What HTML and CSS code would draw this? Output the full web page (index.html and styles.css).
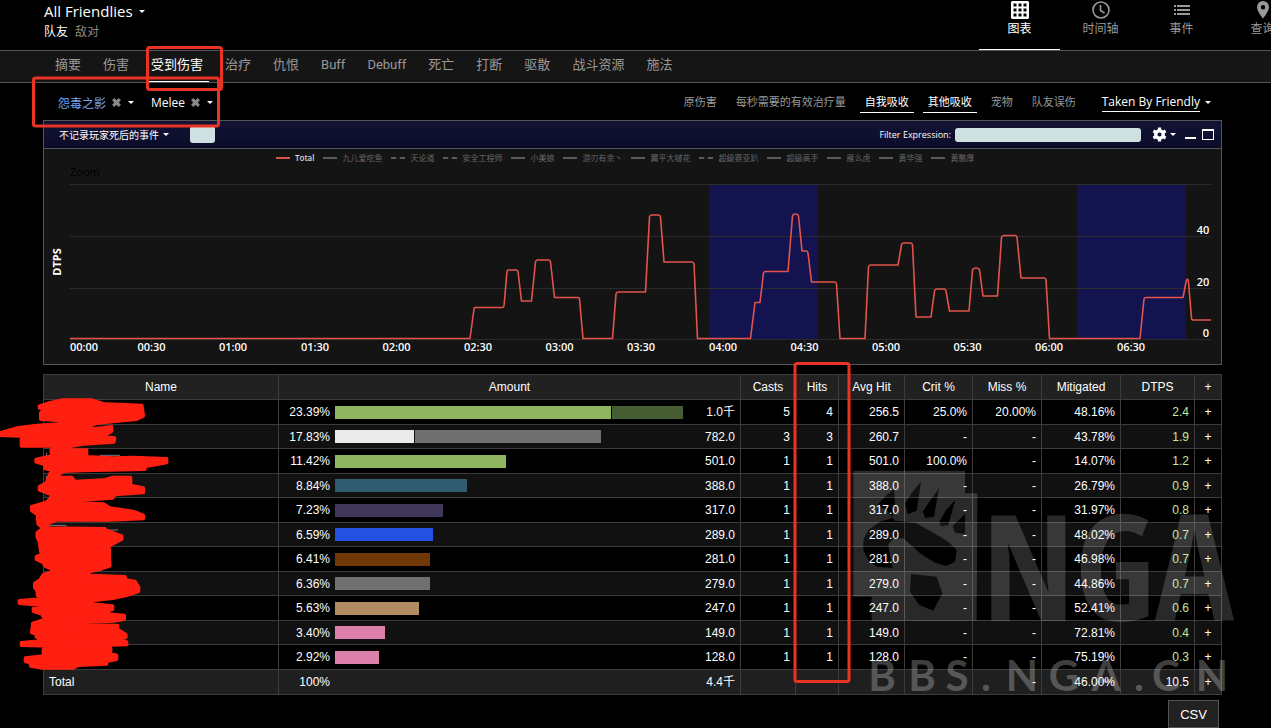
FILE: index.html
```html
<!DOCTYPE html>
<html lang="zh-CN">
<head>
<meta charset="utf-8">
<title>受到伤害</title>
<link rel="stylesheet" href="styles.css">
</head>
<body>
<header class="top">
  <div class="who">
    <button class="who-name">All Friendlies <i class="caret"></i></button>
    <div class="sides"><a class="on" href="#">队友</a><a href="#">敌对</a></div>
  </div>
  <nav class="views">
    <a class="view on" href="#"><svg viewBox="0 0 20 20"><path fill-rule="evenodd" d="M2 1h16l1 1v16l-1 1H2l-1-1V2zM3.500 3.500v3h3v-3zM8.500 3.500v3h3v-3zM13.500 3.500v3h3v-3zM3.500 8.500v3h3v-3zM8.500 8.500v3h3v-3zM13.500 8.500v3h3v-3zM3.500 13.500v3h3v-3zM8.500 13.500v3h3v-3zM13.500 13.500v3h3v-3z"/></svg>图表</a>
    <a class="view" href="#"><svg viewBox="0 0 20 20"><g fill="none" stroke="currentColor" stroke-width="1.600"><circle cx="10" cy="10" r="8"/><path d="M9.500 5v5.500l4 2.500"/></g></svg>时间轴</a>
    <a class="view" href="#"><svg viewBox="0 0 20 20"><path d="M2 5h2v2H2zM5 5h13v2H5zM2 9h2v2H2zM5 9h13v2H5zM2 13h2v2H2zM5 13h13v2H5z"/></svg>事件</a>
    <a class="view" href="#"><svg viewBox="0 0 20 20"><path fill-rule="evenodd" d="M10 1a6 6 0 0 0-6 6c0 4.500 6 11.500 6 11.500S16 11.500 16 7a6 6 0 0 0-6-6zm0 4a2.200 2.200 0 1 1 0 4.400A2.200 2.200 0 0 1 10 5z"/></svg>查询</a>
  </nav>
</header>
<nav class="tabs">
  <a href="#">摘要</a><a href="#">伤害</a><a class="on" href="#">受到伤害</a><a href="#">治疗</a><a href="#">仇恨</a><a href="#">Buff</a><a href="#">Debuff</a><a href="#">死亡</a><a href="#">打断</a><a href="#">驱散</a><a href="#">战斗资源</a><a href="#">施法</a>
</nav>
<main class="page">
  <div class="filters">
    <div class="picked">
      <span class="pick"><a class="enemy" href="#">怨毒之影</a><button class="x" aria-label="移除怨毒之影"><svg viewBox="0 0 10 10"><path d="M2 2l6 6M8 2l-6 6"/></svg></button><i class="caret"></i></span>
      <span class="pick"><a href="#">Melee</a><button class="x" aria-label="移除 Melee"><svg viewBox="0 0 10 10"><path d="M2 2l6 6M8 2l-6 6"/></svg></button><i class="caret"></i></span>
    </div>
    <div class="options">
      <a href="#">原伤害</a><a href="#">每秒需要的有效治疗量</a><a class="on" href="#">自我吸收</a><a class="on" href="#">其他吸收</a><a href="#">宠物</a><a href="#">队友误伤</a>
      <button class="by"><span>Taken By Friendly</span><i class="caret"></i></button>
    </div>
  </div>

  <section class="panel">
    <div class="bar">
      <button class="deaths">不记录玩家死后的事件<i class="caret"></i></button>
      <button class="blank" aria-label="切换"></button>
      <label class="expr-label" for="expr">Filter Expression:</label>
      <input class="expr" id="expr" type="text">
      <button class="gear" aria-label="设置"><svg viewBox="0 0 16 16"><g fill="none" stroke="currentColor"><circle cx="8" cy="8" r="4" stroke-width="3.600"/><path stroke-width="3.400" d="M8 0.500v3M8 12.500v3M1.500 4.250l2.600 1.500M11.900 10.250l2.600 1.500M1.500 11.750l2.600-1.500M11.900 5.750l2.600-1.500"/></g></svg><i class="caret"></i></button>
      <button class="min" aria-label="最小化"></button>
      <button class="max" aria-label="最大化"></button>
    </div>
    <div class="chart">
      <ul class="legend">
        <li class="on"><i></i>Total</li><li><i></i>九儿爱吃鱼</li><li class="dash"><i></i>天论道</li><li class="dash"><i></i>安全工程师</li><li><i></i>小美娘</li><li><i></i>游刃有余丶</li><li><i></i>翼平大啵花</li><li class="dash"><i></i>超级赛亚趴</li><li><i></i>超级高手</li><li><i></i>雁么虎</li><li><i></i>黄华强</li><li><i></i>黄憨厚</li>
      </ul>
      <div class="zoom">Zoom</div>
      <svg class="plot" viewBox="44 180 1177 184" role="img" aria-label="DTPS">
        <path class="band" d="M709 185h109v154H709zM1077 185h109v154h-109z"/>
        <path class="grid" d="M70 184.500H1211M70 236.500H1211M70 288.500H1211M70 339.500H1211M70.500 339v4M151.500 339v4M233.500 339v4M315.500 339v4M396.500 339v4M478.500 339v4M560.500 339v4M641.500 339v4M723.500 339v4M804.500 339v4M886.500 339v4M967.500 339v4M1049.500 339v4M1131.500 339v4"/>
        <path class="line" d="M70 338.500H470L474 309Q474 307.500 475.500 307.500H502Q503.500 307.500 504 306L507 271.500Q507 270 508.500 270H516Q517.500 270 518 271.500L521.500 301H531.500L535.500 262Q536 260 537.500 260H549Q550 260 550.500 262L554.500 297.500H578Q579 297.500 579.500 299L583 338.500H612.500L616 294Q616.500 292 618 292H645.500L649.500 217Q650 215 651.500 215H659Q660 215 660.500 217L664 262H692Q693.500 262 694 264L697.500 338.500H750.500L755 302.500H760L763.500 273Q764 271.500 765.500 271.500H788L792.500 216Q793 214 795.500 214T798.500 216L802 251H806.500Q807.500 251 808 253L811.500 282H835Q836 282 836.500 284L840 338.500H865L868.500 267Q869 265 870.500 265H898L901.500 245Q902 243 903.500 243H911Q912 243 912.500 245L916 317H931L934.500 291Q935 289 936.500 289H944.500Q945.500 289 946 291L949.500 311H969L972.500 270Q973 268 976 268T979.500 270L983 296H997.500L1001.500 237.500Q1002 235.500 1003.500 235.500H1015.500Q1016.500 235.500 1017 237.500L1021 278H1044.500Q1045.500 278 1046 280L1049.500 338.500H1140L1144 299Q1144.500 297.500 1146 297.500H1183L1186 282Q1187.500 276 1188.500 282L1191.500 318Q1191.500 320 1193 320H1211"/>
        <g class="ticks">
          <text x="84" y="351">00:00</text><text x="151.500" y="351">00:30</text><text x="233" y="351">01:00</text><text x="315" y="351">01:30</text><text x="396.500" y="351">02:00</text><text x="478" y="351">02:30</text><text x="559.500" y="351">03:00</text><text x="641" y="351">03:30</text><text x="723" y="351">04:00</text><text x="804.500" y="351">04:30</text><text x="886" y="351">05:00</text><text x="967.500" y="351">05:30</text><text x="1049" y="351">06:00</text><text x="1131" y="351">06:30</text>
          <text x="1203" y="234">40</text><text x="1203" y="286">20</text><text x="1206" y="337">0</text>
          <text class="axis" transform="translate(61 262) rotate(-90)">DTPS</text>
        </g>
      </svg>
    </div>
  </section>

  <table class="data">
    <colgroup><col class="c-name"><col><col class="c-casts"><col class="c-hits"><col class="c-avg"><col class="c-crit"><col class="c-miss"><col class="c-mit"><col class="c-dtps"><col class="c-add"></colgroup>
    <thead><tr><th>Name</th><th>Amount</th><th>Casts</th><th>Hits</th><th>Avg Hit</th><th>Crit %</th><th>Miss %</th><th>Mitigated</th><th>DTPS</th><th>+</th></tr></thead>
    <tbody>
    <tr><td></td><td><div class="amt"><span>23.39%</span><div class="track"><b class="green" style="width:79.300%"></b><b class="olive" style="width:20.400%"></b></div><span>1.0千</span></div></td><td>5</td><td>4</td><td>256.5</td><td>25.0%</td><td>20.00%</td><td>48.16%</td><td>2.4</td><td>+</td></tr>
    <tr><td></td><td><div class="amt"><span>17.83%</span><div class="track"><b class="white" style="width:22.800%"></b><b class="gray" style="width:53.300%"></b></div><span>782.0</span></div></td><td>3</td><td>3</td><td>260.7</td><td>-</td><td>-</td><td>43.78%</td><td>1.9</td><td>+</td></tr>
    <tr><td></td><td><div class="amt"><span>11.42%</span><div class="track"><b class="green" style="width:49%"></b></div><span>501.0</span></div></td><td>1</td><td>1</td><td>501.0</td><td>100.0%</td><td>-</td><td>14.07%</td><td>1.2</td><td>+</td></tr>
    <tr><td></td><td><div class="amt"><span>8.84%</span><div class="track"><b class="teal" style="width:37.800%"></b></div><span>388.0</span></div></td><td>1</td><td>1</td><td>388.0</td><td>-</td><td>-</td><td>26.79%</td><td>0.9</td><td>+</td></tr>
    <tr><td></td><td><div class="amt"><span>7.23%</span><div class="track"><b class="violet" style="width:30.900%"></b></div><span>317.0</span></div></td><td>1</td><td>1</td><td>317.0</td><td>-</td><td>-</td><td>31.97%</td><td>0.8</td><td>+</td></tr>
    <tr><td></td><td><div class="amt"><span>6.59%</span><div class="track"><b class="blue" style="width:28.200%"></b></div><span>289.0</span></div></td><td>1</td><td>1</td><td>289.0</td><td>-</td><td>-</td><td>48.02%</td><td>0.7</td><td>+</td></tr>
    <tr><td></td><td><div class="amt"><span>6.41%</span><div class="track"><b class="brown" style="width:27.400%"></b></div><span>281.0</span></div></td><td>1</td><td>1</td><td>281.0</td><td>-</td><td>-</td><td>46.98%</td><td>0.7</td><td>+</td></tr>
    <tr><td></td><td><div class="amt"><span>6.36%</span><div class="track"><b class="gray" style="width:27.200%"></b></div><span>279.0</span></div></td><td>1</td><td>1</td><td>279.0</td><td>-</td><td>-</td><td>44.86%</td><td>0.7</td><td>+</td></tr>
    <tr><td></td><td><div class="amt"><span>5.63%</span><div class="track"><b class="tan" style="width:24.200%"></b></div><span>247.0</span></div></td><td>1</td><td>1</td><td>247.0</td><td>-</td><td>-</td><td>52.41%</td><td>0.6</td><td>+</td></tr>
    <tr><td></td><td><div class="amt"><span>3.40%</span><div class="track"><b class="pink" style="width:14.500%"></b></div><span>149.0</span></div></td><td>1</td><td>1</td><td>149.0</td><td>-</td><td>-</td><td>72.81%</td><td>0.4</td><td>+</td></tr>
    <tr><td></td><td><div class="amt"><span>2.92%</span><div class="track"><b class="pink" style="width:12.500%"></b></div><span>128.0</span></div></td><td>1</td><td>1</td><td>128.0</td><td>-</td><td>-</td><td>75.19%</td><td>0.3</td><td>+</td></tr>
    </tbody>
    <tfoot><tr><td>Total</td><td><div class="amt"><span>100%</span><div class="track"></div><span>4.4千</span></div></td><td></td><td></td><td></td><td></td><td>-</td><td>46.00%</td><td>10.5</td><td>+</td></tr></tfoot>
  </table>
  <div class="export"><button class="csv">CSV</button></div>
</main>

<svg class="overlay" width="1271" height="728" viewBox="0 0 1271 728" aria-hidden="true">
  <g class="mark">
    <path fill-rule="evenodd" transform="translate(840 450) scale(.33333)" d="M45 62H375V130H412L410 512H95V440H40V62zM112 165L140 135 162 118 165 165 155 205 120 215 85 240 70 270V300L85 330 110 350 158 354 150 320 145 285 160 265H190L240 310 285 338 318 348 345 335 350 300 325 275 270 242 225 218 195 215 165 212 140 180zM243 95L215 130 195 160 203 192 230 182zM297 115L268 155 248 185 256 204 282 200zM346 150L318 180 298 215 303 229 325 225zM375 192L338 228 345 248 375 252zM213 372L290 380 307 430 280 482 238 465 210 425z"/>
    <text class="nga" x="982" y="621">NGA</text>
  </g>
  <text class="site" x="882 922 957 986 1022 1064 1106 1139 1166 1212" y="691">BBS.NGA.CN</text>
  <g class="hint">
    <path transform="translate(0 370) scale(.33333)" stroke="#77778a" d="M140 98h35M140 248v50M140 318v55M142 466h55v10M300 256h60M258 332l8-4M285 330l8-3M310 200l12-4M320 480h35"/>
  </g>
  <g class="scribble">
    <path transform="translate(0 370) scale(.33333)" d="M118 108L150 98 190 90H275L315 102 380 104 426 106 430 138 410 148 325 156 290 160 250 172 285 176 335 170V184L305 200 344 204 342 216 250 222 195 232 190 240H260V260L340 264 400 262 500 266V278L435 290V298L250 302 190 304 165 322H215L225 334 310 330 340 322 392 322V346L430 354V368L345 374 338 384 250 390 170 396 310 402 330 414 400 424 430 436V446L330 450H170L140 462 145 474 315 476V486L365 498V506L325 530V545H122L120 520 112 502V488L130 475 114 462 112 434 95 422V410L140 396 150 386 156 374 118 360V350L140 338 150 310 165 302 135 296V284L108 276V268L155 258 153 240 175 228H64V208L90 200 2 196V188L50 174 110 166 175 162 180 152 122 148V128L134 120 118 114z"/>
    <path transform="translate(0 530) scale(.33333)" d="M122 0H318L365 18V28L325 48 328 58V85L330 108 300 118 262 126 270 136 375 140 378 150 405 154 416 172V184L380 196 345 204 275 212 280 222 338 228V238L310 250 373 256V268L335 274 200 278 240 286H353V298L378 314V322L360 326 380 336V344L200 350 332 354V370L350 376V388L320 394V402L235 406 220 414H125L92 408 90 398 76 394V384L130 378V356L150 348 64 346V338L125 332 108 320 115 314 95 308 98 280 135 268 125 252 100 244V236L125 226 58 220V212L125 206 112 196V184L104 172V160L120 150 130 134 155 126V118L135 108 130 98 109 88V80L130 70 120 50V34L112 22V10z"/>
  </g>
  <g class="boxes"><rect x="147.500" y="47.500" width="74" height="42" rx="2"/><rect x="33.500" y="78" width="185" height="48" rx="2"/><rect x="795" y="363.500" width="54" height="318" rx="2"/></g>
</svg>
</body>
</html>
```
FILE: styles.css
```css
* { box-sizing: border-box; }
body {
  position: relative;
  margin: 0;
  min-height: 100vh;
  overflow: hidden;
  background: #000;
  color: #fff;
  font-family: "Open Sans", "Noto Sans CJK SC", sans-serif;
  font-size: 12px;
}
a { color: inherit; text-decoration: none; }
button { margin: 0; padding: 0; border: 0; background: none; color: inherit; font: inherit; }
svg { fill: currentColor; }
.caret {
  display: inline-block;
  border: 3px solid transparent;
  border-top-color: #fff;
  border-bottom: 0;
}

/* Header */
.top { display: flex; justify-content: space-between; height: 50px; padding-left: 44px; overflow: hidden; }
.who-name { display: flex; align-items: center; gap: 6px; height: 22px; font-size: 15px; line-height: 20px; }
.sides { display: flex; gap: 7px; line-height: 20px; color: #888; }
.sides .on { color: #fff; }
.views { display: flex; margin-right: -32px; }
.view {
  display: flex;
  flex-direction: column;
  align-items: center;
  width: 81px;
  line-height: 18px;
  color: #999;
}
.view svg { width: 20px; height: 20px; }
.view.on { color: #fff; border-bottom: 1px solid #fff; }

.tabs {
  display: flex;
  gap: 11px;
  height: 33px;
  padding-left: 50px;
  border: solid #555;
  border-width: 1px 0;
  background: #151515;
  color: #999;
  font-family: Roboto, "Noto Sans CJK SC", sans-serif;
  font-size: 13px;
  line-height: 28px;
}
.tabs a { padding: 0 6px 0 5px; }
.tabs .on { color: #fff; border-bottom: 1px solid #fff; }

.page { padding: 0 49px 0 43px; }
.filters { display: flex; justify-content: space-between; align-items: center; height: 37px; padding: 2px 11px 0 15px; }
.picked { display: flex; gap: 17px; }
.pick { display: flex; align-items: center; gap: 5px; }
.pick .caret { margin-left: 1px; }
.enemy { color: #75a2f0; }
.x { display: flex; width: 11px; }
.x svg { width: 11px; height: 11px; stroke: #888; stroke-width: 3; }
.options { display: flex; align-items: center; gap: 9px; color: #999; font-size: 11px; }
.options a { padding: 0 5px; line-height: 20px; border-bottom: 1px solid transparent; }
.options .on { color: #fff; border-color: #fff; }
.by { display: flex; align-items: center; gap: 5px; margin-left: 12px; color: #fff; font-size: 12px; }
.by span { line-height: 18px; border-bottom: 1px solid #fff; }

/* Chart panel */
.panel { border: 1px solid #555; background: #141414; }
.bar {
  display: flex;
  align-items: center;
  height: 28px;
  padding: 0 7px 0 15px;
  border-bottom: 1px solid #555;
  background: linear-gradient(#131336, #0b0b29);
  font-size: 10px;
}
.deaths { display: flex; align-items: center; gap: 4px; }
.blank { width: 25px; height: 17px; margin-left: 21px; border-radius: 3px; background: #cfe0e2; }
.expr-label { margin-left: auto; font-size: 9px; }
.expr { width: 186px; height: 14px; margin: 0 11px 0 4px; border: 0; border-radius: 3px; background: #cfe0e2; }
.gear { display: flex; align-items: center; gap: 3px; }
.gear svg { width: 15px; height: 15px; }
.min { width: 11px; height: 8px; margin: 0 6px 0 9px; border-bottom: 2px solid #fff; }
.max { width: 12px; height: 11px; border: 1px solid #fff; border-top-width: 2px; }
.legend {
  display: flex;
  gap: 9px;
  margin: 0;
  padding: 0 0 0 232px;
  list-style: none;
  color: #666;
  font-size: 8px;
  line-height: 18px;
  white-space: nowrap;
}
.legend li { display: flex; align-items: center; gap: 5px; }
.legend i { width: 14px; border-top: 2px solid #5c5c5c; }
.legend .dash i { border-top-style: dashed; }
.legend .on { color: #ddd; font-weight: 600; }
.legend .on i { border-color: #d9534a; }
.zoom { height: 13px; padding-left: 26px; color: #000; font-size: 11px; line-height: 10px; }
.plot { display: block; width: 100%; height: auto; }
.band { fill: #13134f; }
.grid { fill: none; stroke: #2b2b2b; }
.line { fill: none; stroke: #e4534b; stroke-width: 1.6; stroke-linejoin: round; }
.ticks { fill: #fff; font-size: 10px; font-weight: 600; text-anchor: middle; }
.ticks text { font-size: 11px; }
.ticks .axis { font-weight: 700; }

/* Table */
.data {
  width: 100%;
  margin-top: 9px;
  border-collapse: collapse;
  table-layout: fixed;
  font-family: "Liberation Sans", "Noto Sans CJK SC", sans-serif;
  font-size: 12px;
  line-height: 16px;
}
.data th, .data td { height: 25px; padding: 0 5px; border: 1px solid #3c3c3c; text-align: right; font-weight: 400; }
.data th { padding: 0; text-align: center; background: #212121; }
.data tbody tr:nth-child(even) { background: #111; }
.data tbody tr:nth-child(even) td { height: 24px; }
.data tfoot { background: #1f1f1f; }
.data td:first-child { text-align: left; }
.data td:last-child { text-align: center; }
.data tbody td:nth-child(9) { color: #c5e89a; }
.c-name { width: 235px; }
.c-casts { width: 55px; }
.c-hits { width: 43px; }
.c-avg { width: 66px; }
.c-crit { width: 68px; }
.c-miss { width: 69px; }
.c-mit { width: 79px; }
.c-dtps { width: 74px; }
.c-add { width: 27px; }
.amt { display: grid; grid-template-columns: 46px 1fr 47px; column-gap: 5px; align-items: center; }
.track { display: flex; gap: 1px; height: 13px; }
.green { background: #8fb561; }
.olive { background: #465c33; }
.white { background: #ebebeb; }
.gray { background: #707070; }
.teal { background: #315b6e; }
.violet { background: #40375a; }
.blue { background: #2451e2; }
.brown { background: #703804; }
.tan { background: #b18b62; }
.pink { background: #dc7fab; }
.export { display: flex; justify-content: flex-end; padding: 5px 3px 0 0; }
.csv { width: 51px; height: 28px; border: 1px solid #555; background: #222; font: 13px "Liberation Sans", sans-serif; }

/* Watermark and pen marks */
.overlay { position: absolute; top: 0; left: 0; pointer-events: none; }
.mark { fill: #fff; opacity: .16; }
.nga { font: 900 148px "Noto Sans ExtraCondensed", "Open Sans Condensed", "Roboto Condensed", "Liberation Sans Narrow", "Liberation Sans", sans-serif; }
.site { fill: #fff; fill-opacity: .25; font: 700 42px Lato, sans-serif; text-anchor: middle; }
.hint path { fill: none; stroke-width: 3; }
.scribble { fill: #ff2012; stroke: #ff2012; stroke-width: 10; stroke-linejoin: round; }
.boxes { fill: none; stroke: #e93323; stroke-width: 3; }
```
